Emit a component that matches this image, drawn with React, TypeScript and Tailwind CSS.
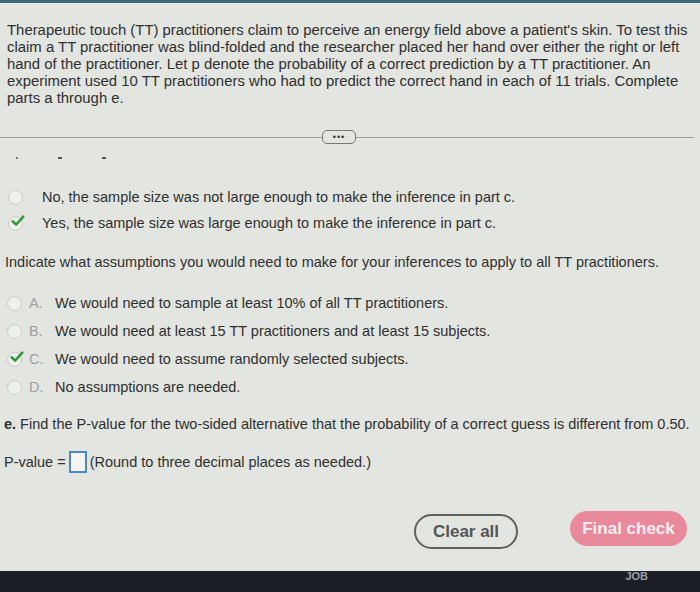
import React from 'react'

const FONT = { fontFamily: '"Liberation Sans", Arial, sans-serif' }

function Radio({ checked }: { checked?: boolean }) {
  return (
    <span className="relative inline-flex h-[15px] w-[15px] shrink-0 items-center justify-center rounded-full border border-[#c9cbc6] bg-[#eef0ec]">
      {checked && (
        <svg viewBox="0 0 16 16" className="absolute -top-[3px] left-[2px] h-[14px] w-[14px]">
          <path d="M2 8.5 L6 12 L14 3" fill="none" stroke="#2f9a3a" strokeWidth="3" strokeLinecap="round" strokeLinejoin="round" />
        </svg>
      )}
    </span>
  )
}

const parts = [
  { key: 'A', text: 'We would need to sample at least 10% of all TT practitioners.' },
  { key: 'B', text: 'We would need at least 15 TT practitioners and at least 15 subjects.' },
  { key: 'C', text: 'We would need to assume randomly selected subjects.', checked: true },
  { key: 'D', text: 'No assumptions are needed.' },
]

export default function App() {
  return (
    <div className="flex h-[592px] w-[700px] flex-col overflow-hidden bg-[#e3e5e0] text-[#2f2f2f] text-[14.5px] leading-[17px]" style={FONT}>
      <div className="h-[3px] bg-[#3c6b78]" />
      <p className="whitespace-nowrap pl-[7px] pt-[19px] text-[14.9px] leading-[17px]">
        Therapeutic touch (TT) practitioners claim to perceive an energy field above a patient's skin. To test this
        <br />
        claim a TT practitioner was blind-folded and the researcher placed her hand over either the right or left
        <br />
        hand of the practitioner. Let p denote the probability of a correct prediction by a TT practitioner. An
        <br />
        experiment used 10 TT practitioners who had to predict the correct hand in each of 11 trials. Complete
        <br />
        parts a through e.
      </p>

      <div className="relative mt-[23px] h-[14px]">
        <div className="absolute left-0 right-[6px] top-[7px] h-px bg-[#9a9c98]" />
        <div className="absolute left-[322px] top-0 flex h-[14px] w-[34px] items-center justify-center rounded-[5px] border border-[#777] bg-[#e3e5e0] text-[9px] leading-none tracking-[1px]">
          •••
        </div>
      </div>

      <div className="flex gap-[40px] pl-[16px] pt-[13px]">
        <span className="h-[2px] w-[2px] bg-[#777]" />
        <span className="h-[2px] w-[4px] bg-[#555]" />
        <span className="h-[2px] w-[4px] bg-[#555]" />
      </div>

      <div className="mt-[30px] flex flex-col gap-[9px] pl-[8px]">
        <div className="flex items-center gap-[19px]">
          <Radio />
          <span>No, the sample size was not large enough to make the inference in part c.</span>
        </div>
        <div className="flex items-center gap-[19px]">
          <Radio checked />
          <span>Yes, the sample size was large enough to make the inference in part c.</span>
        </div>
      </div>

      <p className="mt-[22px] pl-[5px]">Indicate what assumptions you would need to make for your inferences to apply to all TT practitioners.</p>

      <div className="mt-[24px] flex flex-col gap-[11px] pl-[7px]">
        {parts.map(p => (
          <div key={p.key} className="flex items-center">
            <Radio checked={p.checked} />
            <span className="ml-[7px] w-[26px] text-[#9da0a6]">{p.key}.</span>
            <span>{p.text}</span>
          </div>
        ))}
      </div>

      <p className="mt-[20px] pl-[4px]">
        <span className="font-bold">e.</span> Find the P-value for the two-sided alternative that the probability of a correct guess is different from 0.50.
      </p>

      <div className="mt-[18px] flex items-center pl-[4px]">
        <span>P-value =</span>
        <span className="ml-[3px] h-[22px] w-[18px] border-2 border-[#4d86c9] bg-[#f4f5f2]" />
        <span className="ml-[3px]">(Round to three decimal places as needed.)</span>
      </div>

      <div className="mt-[38px] flex items-start justify-end gap-[52px] pr-[13px]">
        <button className="mt-[3px] h-[35px] w-[104px] rounded-full border-2 border-[#5d5f5e] text-[17px] font-bold text-[#555]">Clear all</button>
        <button className="h-[35px] w-[117px] rounded-full bg-[#e88a9b] text-[17px] font-bold text-[#fbeef0]">Final check</button>
      </div>

      <div className="mt-auto flex h-[21px] items-start justify-end bg-[#1c1f26] pr-[52px]">
        <span className="text-[11px] font-bold leading-[10px] text-[#9aa0a8]">JOB</span>
      </div>
    </div>
  )
}
